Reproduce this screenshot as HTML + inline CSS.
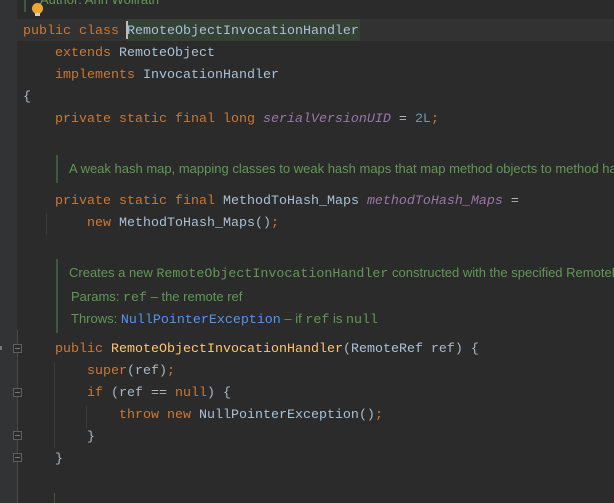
<!DOCTYPE html>
<html><head><meta charset="utf-8"><style>
html,body{margin:0;padding:0;width:614px;height:503px;overflow:hidden;background:#2b2b2b;}
.g{position:absolute;left:0;top:0;width:17px;height:503px;background:#313335;}
.gl{position:absolute;left:17px;top:0;width:1px;height:503px;background:#3a3a3a;}
.l{position:absolute;left:23px;height:22px;line-height:22px;font-family:"Liberation Mono",monospace;font-size:13.33px;color:#a9b7c6;white-space:pre;}
.k{color:#cc7832}.c{color:#a9c0d6}.f{color:#9876aa;font-style:italic}.n{color:#6897bb}.m{color:#ffc66d}
.d{position:absolute;left:69px;height:22px;line-height:22px;font-family:"Liberation Sans",sans-serif;font-size:13px;color:#629755;white-space:pre;}
.d .mono{font-family:"Liberation Mono",monospace;font-size:13.33px}
.d .lk{color:#5394ec;font-family:"Liberation Mono",monospace;font-size:13.33px}
.bar{position:absolute;left:56px;width:2px;background:#3e5a3e;}
.ig{position:absolute;width:1px;background:#3b3b3b;}
.fold{position:absolute;left:13px;width:9px;height:9px;border:1px solid #5e5e5e;background:#2b2b2b;box-sizing:border-box;}
.fold:after{content:"";position:absolute;left:1px;top:3px;width:5px;height:1px;background:#777;}
</style></head><body>
<div class="g"></div>
<div style="position:absolute;left:17px;top:19px;width:597px;height:22px;background:#323232"></div>
<div style="position:absolute;left:127px;top:19px;width:233px;height:22px;background:#344134"></div>
<div style="position:absolute;left:126px;top:21px;width:2px;height:18px;background:#bbb"></div>
<div class="bar" style="top:0;height:12px;left:24px"></div>
<div class="d" style="top:-11px;left:40px">Author: Ann Wollrath</div>
<div style="position:absolute;left:32px;top:3px;width:11px;height:11px;border-radius:50%;background:#f0a732"></div>
<div style="position:absolute;left:35px;top:13px;width:5px;height:3px;background:#d0d0d0"></div>
<div class="gl" style="top:330px;height:173px;left:17px;background:#4a4a4a"></div>

<div class="l" style="top:21px"><span class="k">public class </span><span class="c">RemoteObjectInvocationHandler</span></div>
<div class="l" style="top:43px">    <span class="k">extends </span><span class="c">RemoteObject</span></div>
<div class="l" style="top:65px">    <span class="k">implements </span><span class="c">InvocationHandler</span></div>
<div class="l" style="top:87px">{</div>
<div class="l" style="top:109px">    <span class="k">private static final long </span><span class="f">serialVersionUID</span> = <span class="n">2L</span><span class="k">;</span></div>

<div class="bar" style="top:155px;height:28px"></div>
<div class="d" style="top:158px">A weak hash map, mapping classes to weak hash maps that map method objects to method hashes.</div>
<div class="l" style="top:191px">    <span class="k">private static final </span><span class="c">MethodToHash_Maps </span><span class="f">methodToHash_Maps</span> =</div>
<div class="l" style="top:213px">        <span class="k">new </span><span class="c">MethodToHash_Maps</span>()<span class="k">;</span></div>
<div class="ig" style="left:46px;top:213px;height:22px"></div>

<div class="bar" style="top:259px;height:74px"></div>
<div class="d" style="top:262px">Creates a new <span class="mono">RemoteObjectInvocationHandler</span> constructed with the specified RemoteRef.</div>
<div class="d" style="top:286px;left:71px">Params: <span class="mono">ref</span> – the remote ref</div>
<div class="d" style="top:308px;left:71px">Throws: <span class="lk">NullPointerException</span> – if <span class="mono">ref</span> is <span class="mono">null</span></div>

<div class="l" style="top:339px">    <span class="k">public </span><span class="m">RemoteObjectInvocationHandler</span>(<span class="c">RemoteRef</span> ref) {</div>
<div class="l" style="top:361px">        <span class="k">super</span>(ref)<span class="k">;</span></div>
<div class="l" style="top:383px">        <span class="k">if </span>(ref == <span class="k">null</span>) {</div>
<div class="l" style="top:405px">            <span class="k">throw new </span><span class="c">NullPointerException</span>()<span class="k">;</span></div>
<div class="l" style="top:427px">        }</div>
<div class="l" style="top:449px">    }</div>
<div class="ig" style="left:54px;top:362px;height:86px"></div>
<div class="ig" style="left:86px;top:406px;height:22px"></div>
<div class="ig" style="left:54px;top:493px;height:10px;background:#3e5a3e"></div>

<div class="fold" style="top:344px"></div>
<div class="fold" style="top:388px"></div>
<div class="fold" style="top:431px"></div>
<div class="fold" style="top:453px"></div>
<div style="position:absolute;left:0;top:346px;width:2px;height:4px;background:#777"></div>
</body></html>
